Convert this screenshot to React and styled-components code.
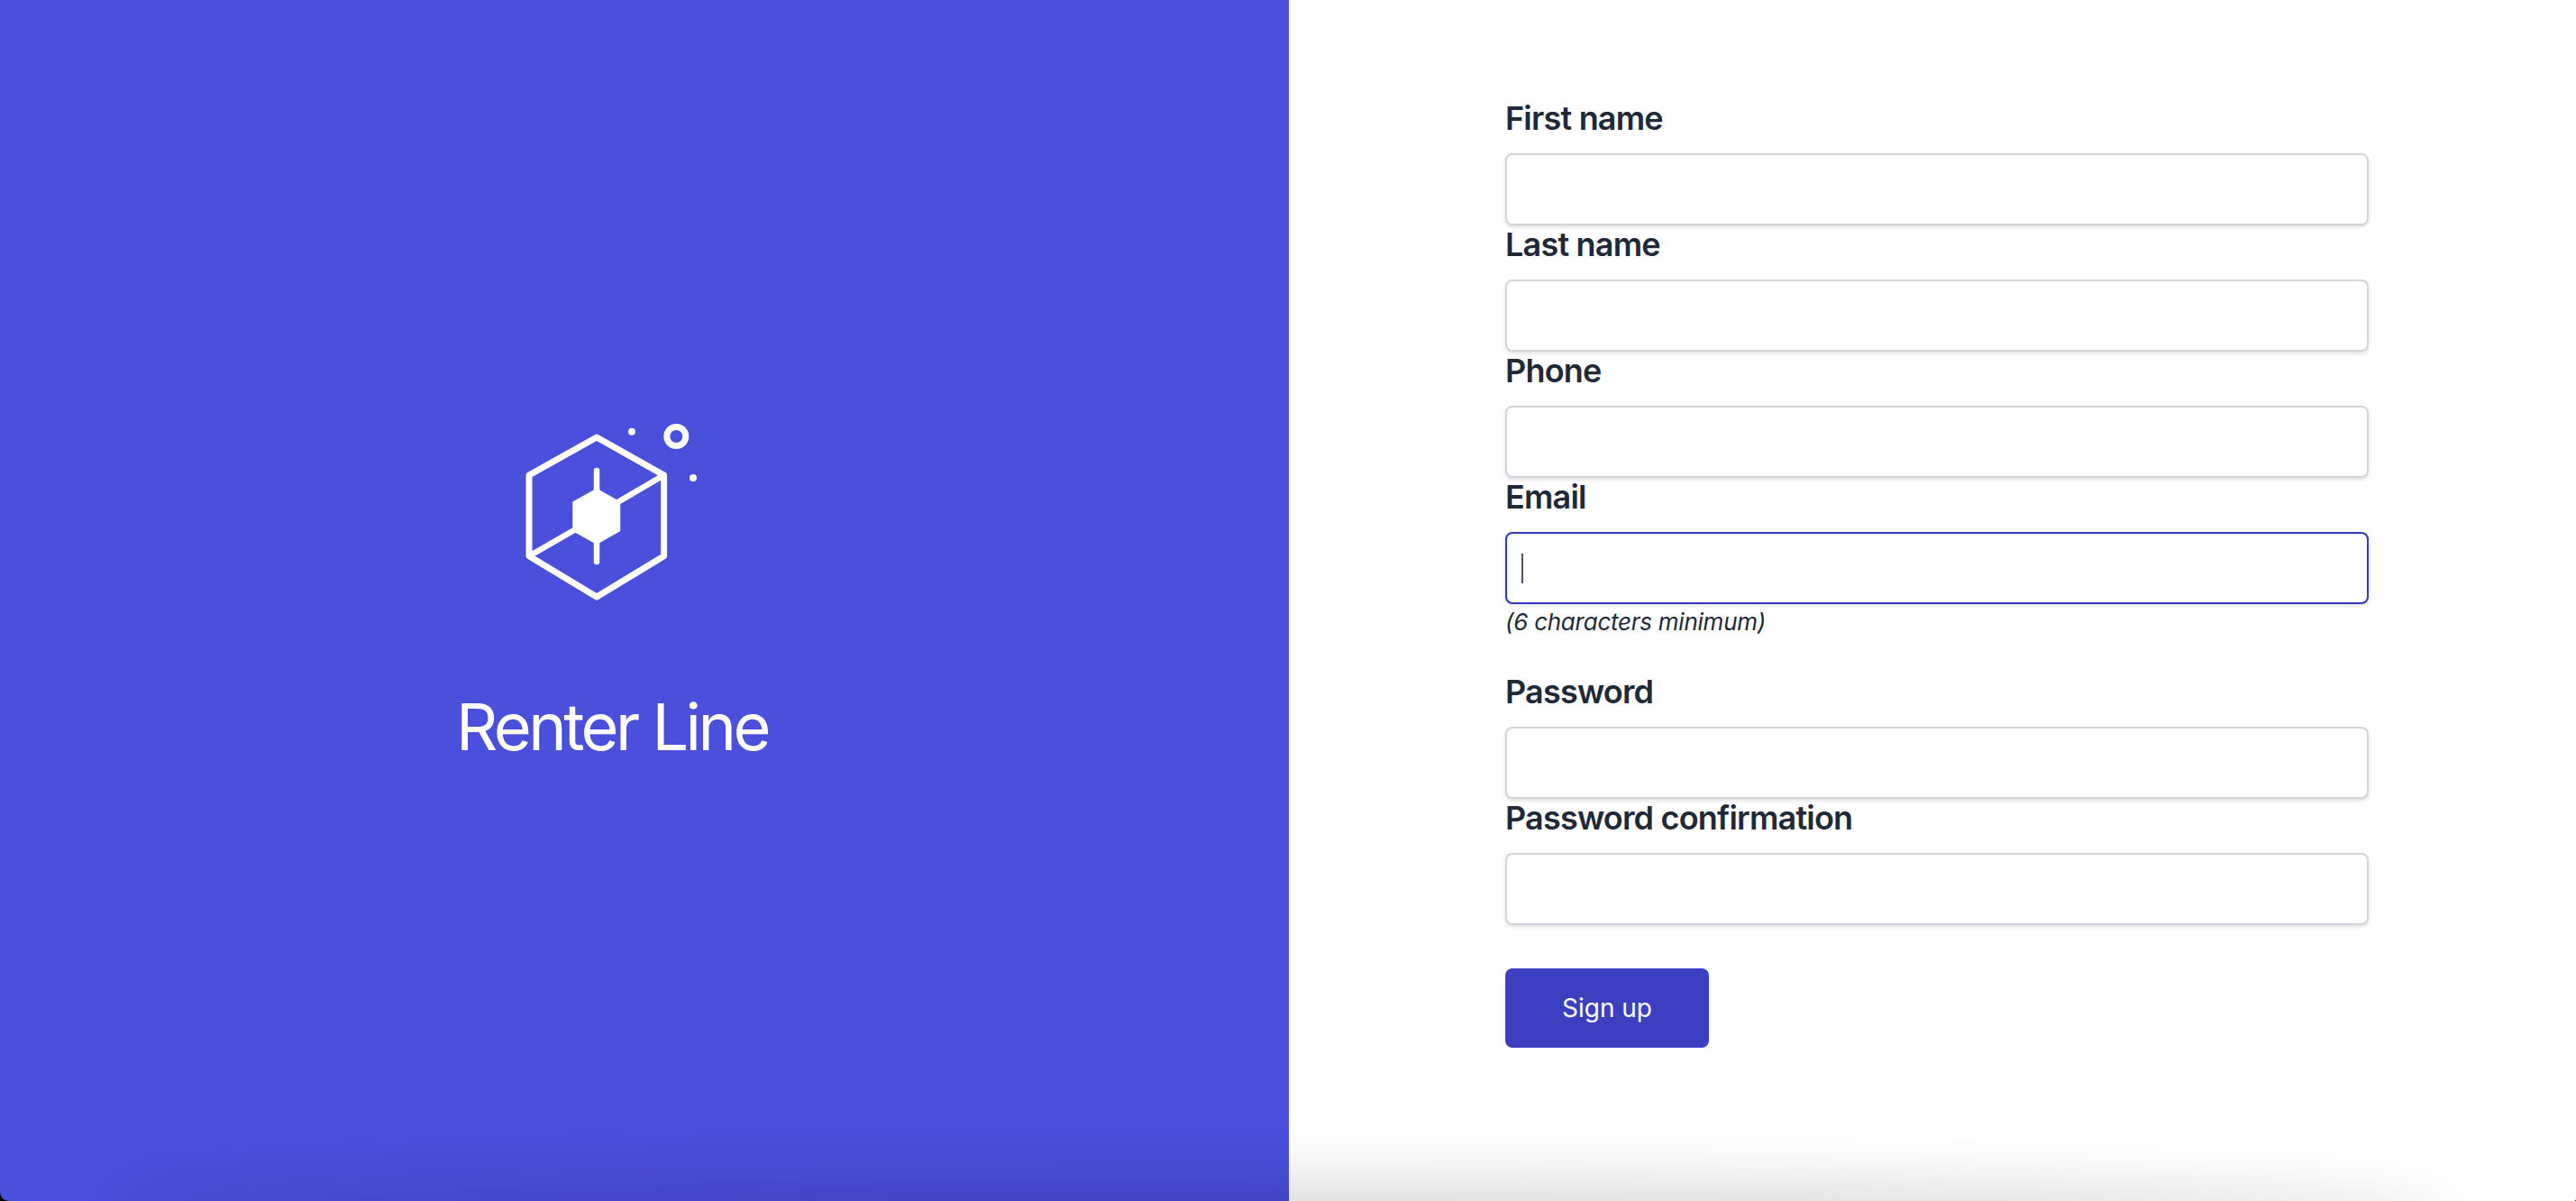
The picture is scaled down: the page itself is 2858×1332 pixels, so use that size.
import React from "react";
import styled, { createGlobalStyle } from "styled-components";

const Global = createGlobalStyle`
  html, body { margin: 0; padding: 0; background: #000; }
  * { box-sizing: border-box; }
  body { font-family: Inter, "Noto Sans", sans-serif; overflow: hidden; }
`;

const Page = styled.div`
  position: relative;
  display: flex;
  width: 2858px;
  height: 1332px;
  overflow: hidden;
  border-radius: 0 0 2px 10px;
`;

const Brand = styled.aside`
  width: 1430px;
  flex: none;
  background: #4a4fdc;
  color: #fff;
  display: flex;
  flex-direction: column;
  align-items: center;
  padding: 466px 72px 0 0;
`;

const Logo = styled.svg`
  display: block;
  width: 220px;
  height: 210px;
  margin-left: 11.4px;
`;

const BrandName = styled.h1`
  margin: 90px 0 0;
  font-size: 72px;
  line-height: 80px;
  font-weight: 430;
  letter-spacing: -3.5px;
`;

const FormPanel = styled.main`
  flex: 1;
  background: #fff;
  padding: 110px 0 0 240px;
`;

const Form = styled.form`
  width: 958px;
  display: flex;
  flex-direction: column;
`;

const Field = styled.div`
  position: relative;
  display: flex;
  flex-direction: column;
`;

const Label = styled.label`
  display: block;
  font-size: 36px;
  line-height: 42px;
  font-weight: 600;
  letter-spacing: -0.8px;
  color: #1f2937;
  margin-bottom: 18px;
`;

const Input = styled.input`
  display: block;
  width: 100%;
  height: 80px;
  padding: 0 16px;
  background: #fff;
  border: 2px solid ${(p) => (p.$focused ? "#3236c0" : "#d2d6dc")};
  border-radius: 8px;
  box-shadow: 0 2px 4px rgba(0, 0, 0, 0.13);
  outline: none;
  font: 400 28px Inter, sans-serif;
`;

const Caret = styled.span`
  position: absolute;
  left: 18px;
  bottom: 23px;
  width: 2px;
  height: 33px;
  background: #4a5568;
`;

const Hint = styled.em`
  display: block;
  font-size: 26px;
  line-height: 36px;
  font-style: italic;
  letter-spacing: -0.25px;
  color: #1f2937;
  margin: 2px 0 38px;
`;

const Submit = styled.button`
  align-self: flex-start;
  width: 226px;
  height: 88px;
  margin-top: 48px;
  border: 0;
  border-radius: 8px;
  background: #3c40c0;
  color: #fff;
  font: 400 28px Inter, sans-serif;
`;

const BottomShade = styled.div`
  position: absolute;
  left: 150px;
  right: 150px;
  top: 1332px;
  height: 40px;
  border-radius: 50%;
  box-shadow: 0 0 70px 20px rgba(0, 0, 0, 0.16);
  pointer-events: none;
`;

const fields = [
  { id: "first", label: "First name" },
  { id: "last", label: "Last name" },
  { id: "phone", label: "Phone" },
  { id: "email", label: "Email", focused: true, hint: "(6 characters minimum)" },
  { id: "password", label: "Password", type: "password" },
  { id: "confirm", label: "Password confirmation", type: "password" },
];

export default function App() {
  return (
    <Page>
      <Global />
      <Brand>
        <Logo viewBox="0 0 220 210" fill="none" stroke="#fff" strokeLinecap="round" strokeLinejoin="round">
          <path d="M87 19 L161.6 61 L161.6 150.7 L87 196 L12 150.7 L12 61 Z" strokeWidth="7" />
          <path d="M161.6 61 L112 90 M12 150.7 L62 122 M87 56 L87 78 M87 136 L87 157" strokeWidth="6.5" />
          <path d="M87 76.5 L112.5 91 L112.5 122.5 L87 137 L61 122.5 L61 91 Z" fill="#fff" strokeWidth="1.5" />
          <circle cx="175.3" cy="18" r="10.5" strokeWidth="7" />
          <circle cx="126" cy="12.7" r="4" fill="#fff" stroke="none" />
          <circle cx="194" cy="64" r="4" fill="#fff" stroke="none" />
        </Logo>
        <BrandName>Renter Line</BrandName>
      </Brand>
      <FormPanel>
        <Form onSubmit={(e) => e.preventDefault()}>
          {fields.map((f) => (
            <React.Fragment key={f.id}>
              <Field>
                <Label htmlFor={f.id}>{f.label}</Label>
                <Input id={f.id} type={f.type || "text"} $focused={f.focused} />
                {f.focused && <Caret />}
              </Field>
              {f.hint && <Hint>{f.hint}</Hint>}
            </React.Fragment>
          ))}
          <Submit type="submit">Sign up</Submit>
        </Form>
      </FormPanel>
      <BottomShade />
    </Page>
  );
}
